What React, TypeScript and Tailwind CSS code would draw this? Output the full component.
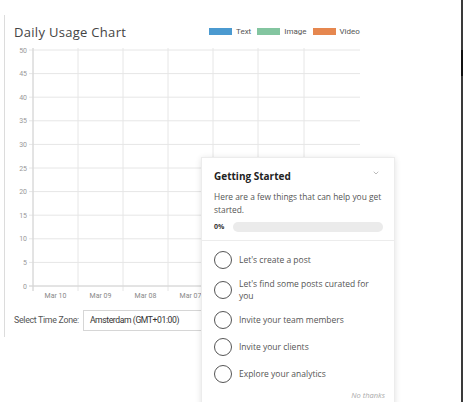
import { ChevronDown } from "lucide-react";

const yTicks = [50, 45, 40, 35, 30, 25, 20, 15, 10, 5, 0];
const xLines = [33, 78, 123, 168, 213, 258, 304];
// the later dates sit under the getting-started card
const xLabels = ["Mar 10", "Mar 09", "Mar 08", "Mar 07"];

const steps = [
  "Let's create a post",
  "Let's find some posts curated for you",
  "Invite your team members",
  "Invite your clients",
  "Explore your analytics",
];

function yPos(v: number) {
  return 286 - (v / 50) * 236;
}

function UsageChart() {
  return (
    <svg width={370} height={262} viewBox="5 46 370 262" className="block">
      {yTicks.map((v) => (
        <g key={v}>
          <line x1={29} x2={360} y1={yPos(v)} y2={yPos(v)} stroke="#e6e6e6" strokeWidth={1} />
          <text
            x={27}
            y={yPos(v) + 2.5}
            textAnchor="end"
            fontSize={7}
            fill="#999"
            fontFamily="Roboto, sans-serif"
          >
            {v}
          </text>
        </g>
      ))}
      {xLines.map((x) => (
        <line key={x} x1={x} x2={x} y1={48} y2={291} stroke="#e6e6e6" strokeWidth={1} />
      ))}
      <line x1={33} x2={33} y1={48} y2={291} stroke="#d4d4d4" strokeWidth={1} />
      <line x1={29} x2={360} y1={286} y2={286} stroke="#d4d4d4" strokeWidth={1} />
      {xLabels.map((l, i) => (
        <text
          key={l}
          x={55.5 + i * 45}
          y={298}
          textAnchor="middle"
          fontSize={7}
          fill="#888"
          fontFamily="Roboto, sans-serif"
        >
          {l}
        </text>
      ))}
    </svg>
  );
}

function GettingStarted() {
  return (
    <div className="absolute left-[201px] top-[157px] w-[194px] h-[260px] bg-white border border-[#ececec] shadow-[0_1px_6px_rgba(0,0,0,0.12)] font-['Open_Sans',sans-serif]">
      <div className="pl-[12px] pr-[10px] pt-[10px] pb-[7px] border-b border-[#ececec]">
        <div className="flex items-center justify-between">
          <span className="text-[10px] font-bold text-[#222] leading-[16px]">Getting Started</span>
          <ChevronDown className="w-[8px] h-[8px] text-[#999] -mt-[6px] mr-[4px]" strokeWidth={2} />
        </div>
        <p className="mt-[6px] text-[8.4px] leading-[13px] text-[#555]">
          Here are a few things that can help you get started.
        </p>
        <div className="mt-[6px] flex items-center gap-[6px]">
          <span className="text-[7px] font-bold text-[#333] w-[13px]">0%</span>
          <div className="flex-1 h-[10px] rounded-full bg-[#ebebeb] mr-[1px]" />
        </div>
      </div>
      <div className="pl-[12px] pt-[10px] flex flex-col gap-[9px]">
        {steps.map((s) => (
          <div key={s} className="flex items-center gap-[7px]">
            <div className="w-[18px] h-[18px] rounded-full border-[1.3px] border-[#555] shrink-0" />
            <span className="text-[8.5px] leading-[12px] text-[#555] pr-[16px]">{s}</span>
          </div>
        ))}
        <div className="flex justify-end mt-[-2px] pr-[9px]">
          <span className="text-[7.5px] italic text-[#aaa]">No thanks</span>
        </div>
      </div>
    </div>
  );
}

export default function App() {
  return (
    <div className="relative w-[463px] h-[402px] bg-white overflow-hidden">
      <div className="absolute right-0 top-0 w-[2px] h-full bg-[#3a3a3a]" />
      <div className="absolute right-0 top-[50px] w-[2px] h-[26px] bg-[#111]" />
      <div className="ml-[4px] mt-[15px] h-[322px] w-[380px] border-l border-[#dcdcdc]">
        <div className="flex items-center h-[31px] pt-[3px] pl-[9px]">
          <h1 className="w-[195px] shrink-0 text-[13px] tracking-[0.3px] text-[#444] font-['Open_Sans',sans-serif] leading-none">
            Daily Usage Chart
          </h1>
          <div className="flex items-center text-[8px] text-[#555] font-['Roboto',sans-serif] -mt-[1px]">
            <span className="w-[23px] h-[7px] bg-[#4b9ad0]" />
            <span className="ml-[4px]">Text</span>
            <span className="ml-[6px] w-[23px] h-[7px] bg-[#83c5a0]" />
            <span className="ml-[4px]">Image</span>
            <span className="ml-[6px] w-[23px] h-[7px] bg-[#e6874f]" />
            <span className="ml-[4px]">Video</span>
          </div>
        </div>
        <UsageChart />
        <div className="flex items-center pl-[9px] mt-[2px] font-['Roboto',sans-serif]">
          <span className="text-[8.8px] tracking-[-0.3px] text-[#555]">Select Time Zone:</span>
          <div className="ml-[4px] w-[190px] h-[21px] border border-[#d6d6d6] flex items-center pl-[6px] text-[8.6px] tracking-[-0.4px] text-[#333]">
            Amsterdam (GMT+01:00)
          </div>
        </div>
      </div>
      <GettingStarted />
    </div>
  );
}
